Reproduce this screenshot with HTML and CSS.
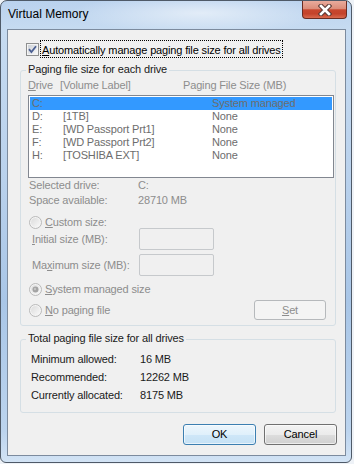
FILE: index.html
```html
<!DOCTYPE html>
<html>
<head>
<meta charset="utf-8">
<title>Virtual Memory</title>
<link rel="stylesheet" href="styles.css">
</head>
<body>
<div class="window">
  <div class="titlebar">
    <span class="title">Virtual Memory</span>
    <div class="close">
      <svg width="14" height="12" viewBox="0 0 14 12">
        <path d="M3 2 L11 10 M11 2 L3 10" stroke="#5a3a36" stroke-width="4.6" stroke-linecap="square" fill="none"/>
        <path d="M3 2 L11 10 M11 2 L3 10" stroke="#ffffff" stroke-width="2.6" stroke-linecap="square" fill="none"/>
      </svg>
    </div>
  </div>
  <div class="client">
    <div class="auto-row">
      <svg class="checkbox" width="13" height="13" viewBox="0 0 13 13">
        <defs>
          <linearGradient id="cbg" x1="0" y1="0" x2="1" y2="1">
            <stop offset="0" stop-color="#cdd1d7"/>
            <stop offset="1" stop-color="#f7f7f7"/>
          </linearGradient>
        </defs>
        <rect x="0.5" y="0.5" width="12" height="12" fill="#f4f4f4" stroke="#8e8f8f"/>
        <rect x="2" y="2" width="9" height="9" fill="url(#cbg)"/>
        <path d="M3 6.2 L5.4 9 L10 3.2" stroke="#4b5f92" stroke-width="1.8" fill="none"/>
      </svg>
      <span class="focus"><u>A</u>utomatically manage paging file size for all drives</span>
    </div>

    <div class="group g1">
      <div class="group-title">Paging file size for each drive</div>
      <div class="list-head">
        <span class="h-drive"><u>D</u>rive</span><span class="h-label">[Volume Label]</span><span>Paging File Size (MB)</span>
      </div>
      <div class="listbox">
        <div class="row sel"><span class="c-drive">C:</span><span class="c-label"></span><span>System managed</span></div>
        <div class="row"><span class="c-drive">D:</span><span class="c-label">[1TB]</span><span>None</span></div>
        <div class="row"><span class="c-drive">E:</span><span class="c-label">[WD Passport Prt1]</span><span>None</span></div>
        <div class="row"><span class="c-drive">F:</span><span class="c-label">[WD Passport Prt2]</span><span>None</span></div>
        <div class="row"><span class="c-drive">H:</span><span class="c-label">[TOSHIBA EXT]</span><span>None</span></div>
      </div>
      <div class="info">
        <span>Selected drive:</span><span>C:</span>
        <span>Space available:</span><span>28710 MB</span>
      </div>
      <div class="radio-row custom">
        <svg class="radio" width="13" height="13" viewBox="0 0 13 13">
          <defs>
            <linearGradient id="rbg" x1="0" y1="0" x2="1" y2="1">
              <stop offset="0" stop-color="#dcdcdc"/>
              <stop offset="1" stop-color="#f8f8f8"/>
            </linearGradient>
          </defs>
          <circle cx="6.5" cy="6.5" r="6" fill="#f4f4f4" stroke="#b9b9b9"/>
          <circle cx="6.5" cy="6.5" r="4.5" fill="url(#rbg)"/>
        </svg>
        <span><u>C</u>ustom size:</span>
      </div>
      <div class="field-row first">
        <span class="field-label"><u>I</u>nitial size (MB):</span>
        <span class="textbox"></span>
      </div>
      <div class="field-row second">
        <span class="field-label">Ma<u>x</u>imum size (MB):</span>
        <span class="textbox"></span>
      </div>
      <div class="radio-row system">
        <svg class="radio" width="13" height="13" viewBox="0 0 13 13">
          <circle cx="6.5" cy="6.5" r="6" fill="#f4f4f4" stroke="#b9b9b9"/>
          <circle cx="6.5" cy="6.5" r="4.5" fill="url(#rbg)"/>
          <circle cx="6.5" cy="6.5" r="3" fill="#a3a3a3"/>
          <circle cx="6" cy="6" r="1.2" fill="#c4c4c4"/>
        </svg>
        <span><u>S</u>ystem managed size</span>
      </div>
      <div class="radio-row nopage">
        <svg class="radio" width="13" height="13" viewBox="0 0 13 13">
          <circle cx="6.5" cy="6.5" r="6" fill="#f4f4f4" stroke="#b9b9b9"/>
          <circle cx="6.5" cy="6.5" r="4.5" fill="url(#rbg)"/>
        </svg>
        <span><u>N</u>o paging file</span>
        <span class="btn set"><u>S</u>et</span>
      </div>
    </div>

    <div class="group g2">
      <div class="group-title">Total paging file size for all drives</div>
      <div class="totals">
        <span>Minimum allowed:</span><span>16 MB</span>
        <span>Recommended:</span><span>12262 MB</span>
        <span>Currently allocated:</span><span>8175 MB</span>
      </div>
    </div>

    <div class="buttons">
      <span class="btn ok">OK</span>
      <span class="btn cancel">Cancel</span>
    </div>
  </div>
</div>
</body>
</html>
```

FILE: styles.css
```css
* { box-sizing: border-box; }
html, body { margin: 0; padding: 0; }
body {
  width: 354px;
  height: 464px;
  overflow: hidden;
  background: #eef2f7;
  font-family: "Liberation Sans", Arial, sans-serif;
  font-size: 11px;
  letter-spacing: -0.15px;
  color: #000;
}
u { text-decoration: underline; text-underline-offset: 1px; }

.window {
  width: 352px;
  height: 463px;
  border: 1px solid #4f5a68;
  border-radius: 7px 7px 6px 6px;
  display: flex;
  flex-direction: column;
  background:
    radial-gradient(ellipse 130px 20px at 200px 12px, rgba(255,255,255,0.55), rgba(255,255,255,0) 100%),
    linear-gradient(to bottom, #bad2ee 0, #c6dbf1 28px, #b9d1ec 180px, #a9c6e7 300px, #bcd4ee 430px, #d3e4f5 462px);
}

.titlebar {
  height: 28px;
  display: flex;
  align-items: flex-start;
}
.title {
  font-size: 12px;
  letter-spacing: 0;
  line-height: 15px;
  padding: 6px 0 0 7px;
  color: #000;
}
.close {
  margin-left: auto;
  margin-right: 4px;
  width: 45px;
  height: 18px;
  border: 1px solid #6a2c22;
  border-top: none;
  border-radius: 0 0 4px 4px;
  background: linear-gradient(to bottom, #e9ab9c 0, #dc8d7a 45%, #c8472f 52%, #c4432b 75%, #d9694e 100%);
  display: flex;
  align-items: center;
  justify-content: center;
}

.client {
  margin: 0 5px 0 6px;
  height: 427px;
  border: 1px solid #7c8b9e;
  background: #f0f0f0;
  padding: 10px 9px 0 12px;
  display: flex;
  flex-direction: column;
}

.auto-row {
  display: flex;
  align-items: center;
  height: 18px;
  padding-left: 6px;
}
.checkbox { flex: none; margin-right: 1px; }
.focus {
  border: 1px dotted #000;
  padding: 2px 1px 0 1px;
  line-height: 14px;
  color: #000;
}

.group {
  border: 1px solid #d5dfe5;
  border-radius: 3px;
  display: flex;
  flex-direction: column;
}
.g1 { margin-top: 12px; padding-bottom: 5px; }
.g2 { margin-top: 13px; padding-bottom: 8px; }
.group-title {
  margin: -9px 0 0 5px;
  padding: 0 2px;
  width: max-content;
  background: #f0f0f0;
  line-height: 15px;
  color: #1a1a1a;
}

.list-head {
  margin-top: 1px;
  padding-left: 7px;
  line-height: 15px;
  color: #8d8d8d;
  display: flex;
}
.h-drive { width: 32px; }
.h-label { width: 123px; }

.listbox {
  margin: 2px 1px 0 7px;
  height: 83px;
  border: 1px solid #828790;
  background: #fff;
  padding: 1px 1px 0 1px;
}
.row {
  display: flex;
  line-height: 13px;
  height: 13px;
  padding-left: 2px;
  color: #6d6d6d;
}
.row.sel { background: #3399ff; }
.c-drive { width: 31px; }
.c-label { width: 149px; }

.info {
  display: grid;
  grid-template-columns: 109px auto;
  padding-left: 8px;
  line-height: 15px;
  color: #8d8d8d;
}

.radio-row {
  display: flex;
  align-items: center;
  padding-left: 8px;
  color: #8d8d8d;
}
.radio { flex: none; margin-right: 3px; }
.custom { margin-top: 8px; line-height: 13px; }
.system { margin-top: 6px; line-height: 15px; }
.nopage { margin-top: 3px; height: 20px; line-height: 15px; }

.field-row {
  display: flex;
  align-items: center;
  padding-left: 11px;
  color: #8d8d8d;
  line-height: 15px;
}
.field-row.first { margin-top: -1px; }
.field-row.second { margin-top: 4px; }
.field-label { width: 107px; }
.textbox {
  width: 75px;
  height: 22px;
  border: 1px solid #c6c9cc;
  border-radius: 2px;
  background: #f0f0f0;
}

.btn {
  display: flex;
  align-items: center;
  justify-content: center;
  border-radius: 3px;
  line-height: 15px;
}
.set {
  margin-left: auto;
  margin-right: 9px;
  width: 72px;
  height: 20px;
  border: 1px solid #b6b9bc;
  background: #f4f4f4;
  color: #8d8d8d;
}

.totals {
  display: grid;
  grid-template-columns: 109px auto;
  margin-top: 4px;
  padding-left: 10px;
  line-height: 18px;
  color: #1a1a1a;
}

.buttons {
  display: flex;
  justify-content: flex-end;
  gap: 8px;
  margin-top: 11px;
  margin-right: -1px;
}
.ok, .cancel {
  width: 73px;
  height: 21px;
  color: #000;
}
.ok {
  border: 1px solid #3c7fb1;
  background: linear-gradient(to bottom, #edf6fc 0, #e0f0fb 50%, #cfe7f8 51%, #c5e1f5 100%);
  box-shadow: inset 0 0 0 1px rgba(255,255,255,0.6);
}
.cancel {
  border: 1px solid #707070;
  background: linear-gradient(to bottom, #f3f3f3 0, #ebebeb 50%, #dddddd 51%, #d0d0d0 100%);
  box-shadow: inset 0 0 0 1px rgba(255,255,255,0.6);
}
```
